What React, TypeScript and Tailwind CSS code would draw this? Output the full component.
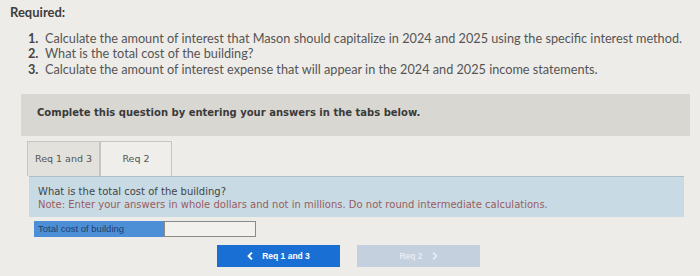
import React from 'react'

export default function App() {
  return (
    <div className="w-[700px] h-[276px] overflow-hidden bg-[#eeece8] relative">
      <div className="pt-[3px] pl-[10px]">
        <p className="font-['Lato',sans-serif] font-bold text-[13px] text-[#3d3d3d]">Required:</p>
        <ol className="mt-[8px] ml-[18px] font-['Lato',sans-serif] text-[12.7px] leading-[15.5px] text-[#555]">
          <li className="flex"><span className="w-[17px] font-bold text-[#444]">1.</span>Calculate the amount of interest that Mason should capitalize in 2024 and 2025 using the specific interest method.</li>
          <li className="flex"><span className="w-[17px] font-bold text-[#444]">2.</span>What is the total cost of the building?</li>
          <li className="flex"><span className="w-[17px] font-bold text-[#444]">3.</span>Calculate the amount of interest expense that will appear in the 2024 and 2025 income statements.</li>
        </ol>
      </div>

      <div className="mt-[17px] ml-[21px] w-[669px] h-[42px] bg-[#d8d7d2] pt-[11px] pl-[16px]">
        <p className="font-['DejaVu_Sans',sans-serif] font-bold text-[10px] text-[#3a3a3a]">Complete this question by entering your answers in the tabs below.</p>
      </div>

      <div className="ml-[27px] mt-[5px] flex h-[35px]">
        <div className="w-[73px] border border-b-0 border-[#c7c5c0] bg-[#e2e1dc] flex items-center justify-center font-['DejaVu_Sans',sans-serif] text-[9.5px] text-[#555]">Req 1 and 3</div>
        <div className="w-[72px] border border-b-0 border-[#c7c5c0] bg-[#efeeea] flex items-center justify-center font-['DejaVu_Sans',sans-serif] text-[9.5px] text-[#555]">Req 2</div>
      </div>

      <div className="ml-[29px] w-[655px] h-[41px] bg-[#c8dbe4] border-t border-[#aebfc8] pl-[9px] pt-[8px] font-['DejaVu_Sans',sans-serif] text-[10px] leading-[13px]">
        <p className="text-[#444]">What is the total cost of the building?</p>
        <p className="text-[#9a5b5e]">Note: Enter your answers in whole dollars and not in millions. Do not round intermediate calculations.</p>
      </div>

      <div className="ml-[34px] mt-[4px] flex h-[16px]">
        <div className="w-[130px] bg-[#4d8fd6] flex items-center pl-[4px] font-['Liberation_Sans',sans-serif] text-[9.5px] text-[#1d3f70]">Total cost of building</div>
        <div className="w-[92px] border border-[#8a8a88] bg-[#f2f1ee]" />
      </div>

      <div className="mt-[8px] ml-[217px] flex gap-[17px]">
        <div className="w-[123px] h-[22px] bg-[#1a6fd4] flex items-center justify-center gap-[9px] font-['Liberation_Sans',sans-serif] font-bold text-[8.5px] text-white">
          <svg width="6" height="8" viewBox="0 0 6 8"><path d="M5 0.5 L1.5 4 L5 7.5" stroke="white" strokeWidth="1.8" fill="none" /></svg>
          <span>Req 1 and 3</span>
        </div>
        <div className="w-[123px] h-[22px] bg-[#c4d0de] flex items-center justify-center gap-[9px] font-['Liberation_Sans',sans-serif] font-bold text-[8.5px] text-[#e6ebf1]">
          <span>Req 2</span>
          <svg width="6" height="8" viewBox="0 0 6 8"><path d="M1 0.5 L4.5 4 L1 7.5" stroke="#e6ebf1" strokeWidth="1.8" fill="none" /></svg>
        </div>
      </div>
    </div>
  )
}
